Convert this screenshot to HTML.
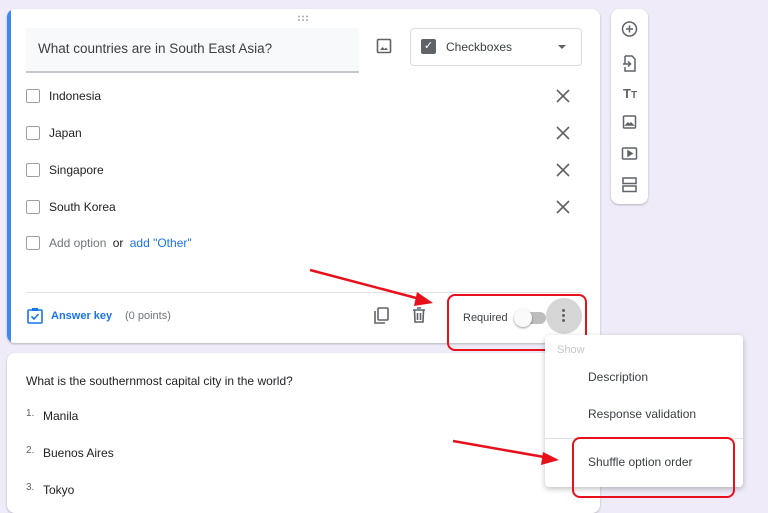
<!DOCTYPE html>
<html><head><style>
body{margin:0;width:768px;height:504px;background:#efebf8;font-family:"Liberation Sans",sans-serif;position:relative;overflow:hidden;color:#202124}
.a{position:absolute}
.card{background:#fff;border-radius:8px;box-shadow:0 1px 2px rgba(0,0,0,.25)}
.cb{width:14px;height:14px;border:1.5px solid #9aa0a6;border-radius:2px;box-sizing:border-box}
.opt{font-size:12px;color:#202124}
</style></head><body>
<div class="a card" style="left:7px;top:9px;width:593px;height:334px;overflow:hidden">
 <div class="a" style="left:0;top:0;width:4px;height:334px;background:#4285f4"></div>
</div>
<svg class="a" style="left:297px;top:15px" width="14" height="7"><g fill="#aaa"><circle cx="2" cy="1.5" r="1"/><circle cx="6" cy="1.5" r="1"/><circle cx="10" cy="1.5" r="1"/><circle cx="2" cy="5" r="1"/><circle cx="6" cy="5" r="1"/><circle cx="10" cy="5" r="1"/></g></svg>
<div class="a" style="left:26px;top:28px;width:333px;height:43px;background:#f8f9fa;border-bottom:2px solid #c4c7cc"></div>
<div class="a" style="left:38px;top:41px;font-size:13.5px;color:#3c4043">What countries are in South East Asia?</div>
<svg class="a" style="left:376px;top:38px" width="16" height="16" viewBox="0 0 16 16"><rect x="1.5" y="1.5" width="13" height="13" rx="1" fill="none" stroke="#5f6368" stroke-width="1.6"/><path d="M4 12l2.5-3 2 2 1.5-1.5L12 12z" fill="#5f6368"/></svg>
<div class="a" style="left:410px;top:28px;width:172px;height:38px;border:1px solid #dadce0;border-radius:4px;box-sizing:border-box"></div>
<div class="a" style="left:421px;top:39px;width:15px;height:15px;background:#5f6368;border-radius:2px;color:#fff;font-size:11px;text-align:center;line-height:15px">✓</div>
<div class="a" style="left:446px;top:40px;font-size:12px;color:#3c4043">Checkboxes</div>
<div class="a" style="left:558px;top:45px;width:0;height:0;border-left:4px solid transparent;border-right:4px solid transparent;border-top:4px solid #5f6368"></div>

<div class="a cb" style="left:26px;top:89px"></div><div class="a opt" style="left:49px;top:89px">Indonesia</div>
<div class="a cb" style="left:26px;top:126px"></div><div class="a opt" style="left:49px;top:126px">Japan</div>
<div class="a cb" style="left:26px;top:163px"></div><div class="a opt" style="left:49px;top:163px">Singapore</div>
<div class="a cb" style="left:26px;top:200px"></div><div class="a opt" style="left:49px;top:200px">South Korea</div>
<svg class="a" style="left:556px;top:89px" width="14" height="130" fill="none" stroke="#5f6368" stroke-width="1.6">
<path d="M1 1l12 12M13 1L1 13"/><path d="M1 38l12 12M13 38L1 50"/><path d="M1 75l12 12M13 75L1 87"/><path d="M1 112l12 12M13 112L1 124"/></svg>
<div class="a cb" style="left:26px;top:236px"></div><div class="a" style="left:49px;top:236px;font-size:12px;color:#70757a">Add option <span style="color:#202124;margin-left:3px">or</span> <span style="color:#1a73e8;margin-left:3px">add "Other"</span></div>

<div class="a" style="left:26px;top:292px;width:556px;height:1px;background:#e0e0e0"></div>
<svg class="a" style="left:27px;top:307px" width="16" height="17" viewBox="0 0 16 17"><rect x="1" y="3" width="14" height="13" rx="1" fill="none" stroke="#1a73e8" stroke-width="1.6"/><rect x="5" y="1" width="6" height="3" fill="#1a73e8"/><path d="M4.5 9.5l2.5 2.5 4.5-5" fill="none" stroke="#1a73e8" stroke-width="1.6"/></svg>
<div class="a" style="left:51px;top:310px;font-size:11px;color:#1a73e8;font-weight:bold">Answer key</div>
<div class="a" style="left:125px;top:310px;font-size:11px;color:#70757a">(0 points)</div>
<svg class="a" style="left:373px;top:307px" width="17" height="18" viewBox="0 0 17 18"><path d="M2 4v12h10" fill="none" stroke="#5f6368" stroke-width="1.6"/><rect x="5" y="1" width="10" height="12" rx="1" fill="none" stroke="#5f6368" stroke-width="1.6"/></svg>
<svg class="a" style="left:412px;top:307px" width="14" height="17" viewBox="0 0 14 17"><path d="M1 3h12M5 1h4M2.5 3l.5 12h8l.5-12M5.5 6v7M8.5 6v7" fill="none" stroke="#5f6368" stroke-width="1.6"/></svg>
<div class="a" style="left:463px;top:312px;font-size:11px;color:#3c4043">Required</div>
<div class="a" style="left:518px;top:312px;width:28px;height:12px;border-radius:6px;background:#bdbdbd"></div>
<div class="a" style="left:514px;top:309px;width:18px;height:18px;border-radius:50%;background:#fafafa;box-shadow:0 1px 2px rgba(0,0,0,.4)"></div>
<div class="a" style="left:546px;top:298px;width:36px;height:36px;border-radius:50%;background:#d6d6d6"></div>
<div class="a" style="left:562px;top:309px;width:3px;height:3px;border-radius:50%;background:#5f6368;box-shadow:0 5px 0 #5f6368,0 10px 0 #5f6368"></div>
<div class="a" style="left:447px;top:294px;width:136px;height:53px;border:2.5px solid #e8111b;border-radius:8px"></div>

<div class="a card" style="left:7px;top:353px;width:593px;height:160px"></div>
<div class="a" style="left:26px;top:374px;font-size:12px">What is the southernmost capital city in the world?</div>
<div class="a" style="left:26px;top:408px;font-size:10px;color:#5f6368">1.</div><div class="a opt" style="left:43px;top:409px">Manila</div>
<div class="a" style="left:26px;top:445px;font-size:10px;color:#5f6368">2.</div><div class="a opt" style="left:43px;top:446px">Buenos Aires</div>
<div class="a" style="left:26px;top:482px;font-size:10px;color:#5f6368">3.</div><div class="a opt" style="left:43px;top:483px">Tokyo</div>

<div class="a" style="left:545px;top:335px;width:198px;height:152px;background:#fff;border-radius:4px;box-shadow:0 2px 6px rgba(0,0,0,.25)"></div>
<div class="a" style="left:557px;top:344px;font-size:11px;color:#c6c6c6">Show</div>
<div class="a" style="left:588px;top:370px;font-size:12px;color:#3c4043">Description</div>
<div class="a" style="left:588px;top:407px;font-size:12px;color:#3c4043">Response validation</div>
<div class="a" style="left:545px;top:438px;width:198px;height:1px;background:#e0e0e0"></div>
<div class="a" style="left:588px;top:455px;font-size:12px;color:#3c4043">Shuffle option order</div>
<div class="a" style="left:572px;top:437px;width:159px;height:57px;border:2.5px solid #e8111b;border-radius:8px"></div>

<div class="a card" style="left:611px;top:9px;width:37px;height:195px"></div>
<svg class="a" style="left:611px;top:9px" width="37" height="195" viewBox="0 0 37 195" fill="none" stroke="#5f6368" stroke-width="1.5">
<circle cx="18.5" cy="20" r="7"/><path d="M18.5 16.5v7M15 20h7"/>
<path d="M14 47h7l3 3v12h-10v-4M14 55v-8M12 55h7M17 52.5l2.5 2.5-2.5 2.5"/>
<text x="12" y="89" font-family="Liberation Sans" font-weight="bold" font-size="13" fill="#5f6368" stroke="none">T</text><text x="20" y="89" font-family="Liberation Sans" font-weight="bold" font-size="10" fill="#5f6368" stroke="none">T</text>
<rect x="12.5" y="107" width="12" height="12" rx="1"/><path d="M15 116l2-2 1.5 1.5 1.5-1.5 2 2z" fill="#5f6368"/>
<rect x="11.5" y="139" width="14" height="11" rx="1"/><path d="M17 142v5l4-2.5z" fill="#5f6368"/>
<rect x="12" y="169" width="13" height="5.5"/><rect x="12" y="177" width="13" height="5.5"/>
</svg>

<svg class="a" style="left:0;top:0" width="768" height="504">
<line x1="310" y1="270" x2="420" y2="299" stroke="#e8111b" stroke-width="2.5"/>
<path d="M433 303l-16-11-3 14z" fill="#e8111b"/>
<line x1="453" y1="441" x2="544" y2="457" stroke="#e8111b" stroke-width="2.5"/>
<path d="M559 460l-16-8-2 13z" fill="#e8111b"/>
</svg>
</body></html>
